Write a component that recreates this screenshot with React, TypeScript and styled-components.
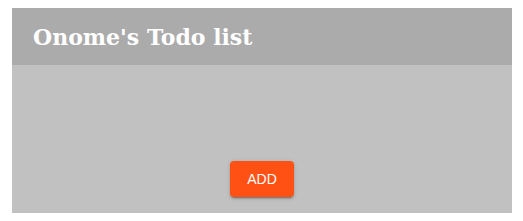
import React from "react";
import styled, { createGlobalStyle } from "styled-components";

const Global = createGlobalStyle`
  body {
    margin: 8px 11px 8px 12px;
    background: #ffffff;
  }
`;

const Card = styled.div`
  width: 500px;
  height: 205px;
  display: flex;
  flex-direction: column;
  background: #c1c1c1;
`;

const Header = styled.header`
  height: 57px;
  display: flex;
  align-items: center;
  padding: 0 21px;
  background: #ababab;
  box-sizing: border-box;
`;

const Title = styled.h1`
  margin: 0;
  font-family: "DejaVu Serif", Georgia, serif;
  font-weight: bold;
  font-size: 22px;
  color: #ffffff;
`;

const Body = styled.main`
  flex: 1;
  display: flex;
  flex-direction: column;
  justify-content: flex-end;
  align-items: center;
  padding-bottom: 16px;
`;

const AddButton = styled.button`
  min-width: 64px;
  height: 36px;
  padding: 6px 16px;
  border: none;
  border-radius: 4px;
  background: #ff5113;
  color: #ffffff;
  font-family: "Liberation Sans", Arial, sans-serif;
  font-size: 14px;
  box-shadow: 0 3px 1px -2px rgba(0,0,0,0.2), 0 2px 2px 0 rgba(0,0,0,0.14), 0 1px 5px 0 rgba(0,0,0,0.12);
  cursor: pointer;
`;

export default function App() {
  return (
    <>
      <Global />
      <Card>
        <Header>
          <Title>Onome's Todo list</Title>
        </Header>
        <Body>
          <AddButton>ADD</AddButton>
        </Body>
      </Card>
    </>
  );
}
